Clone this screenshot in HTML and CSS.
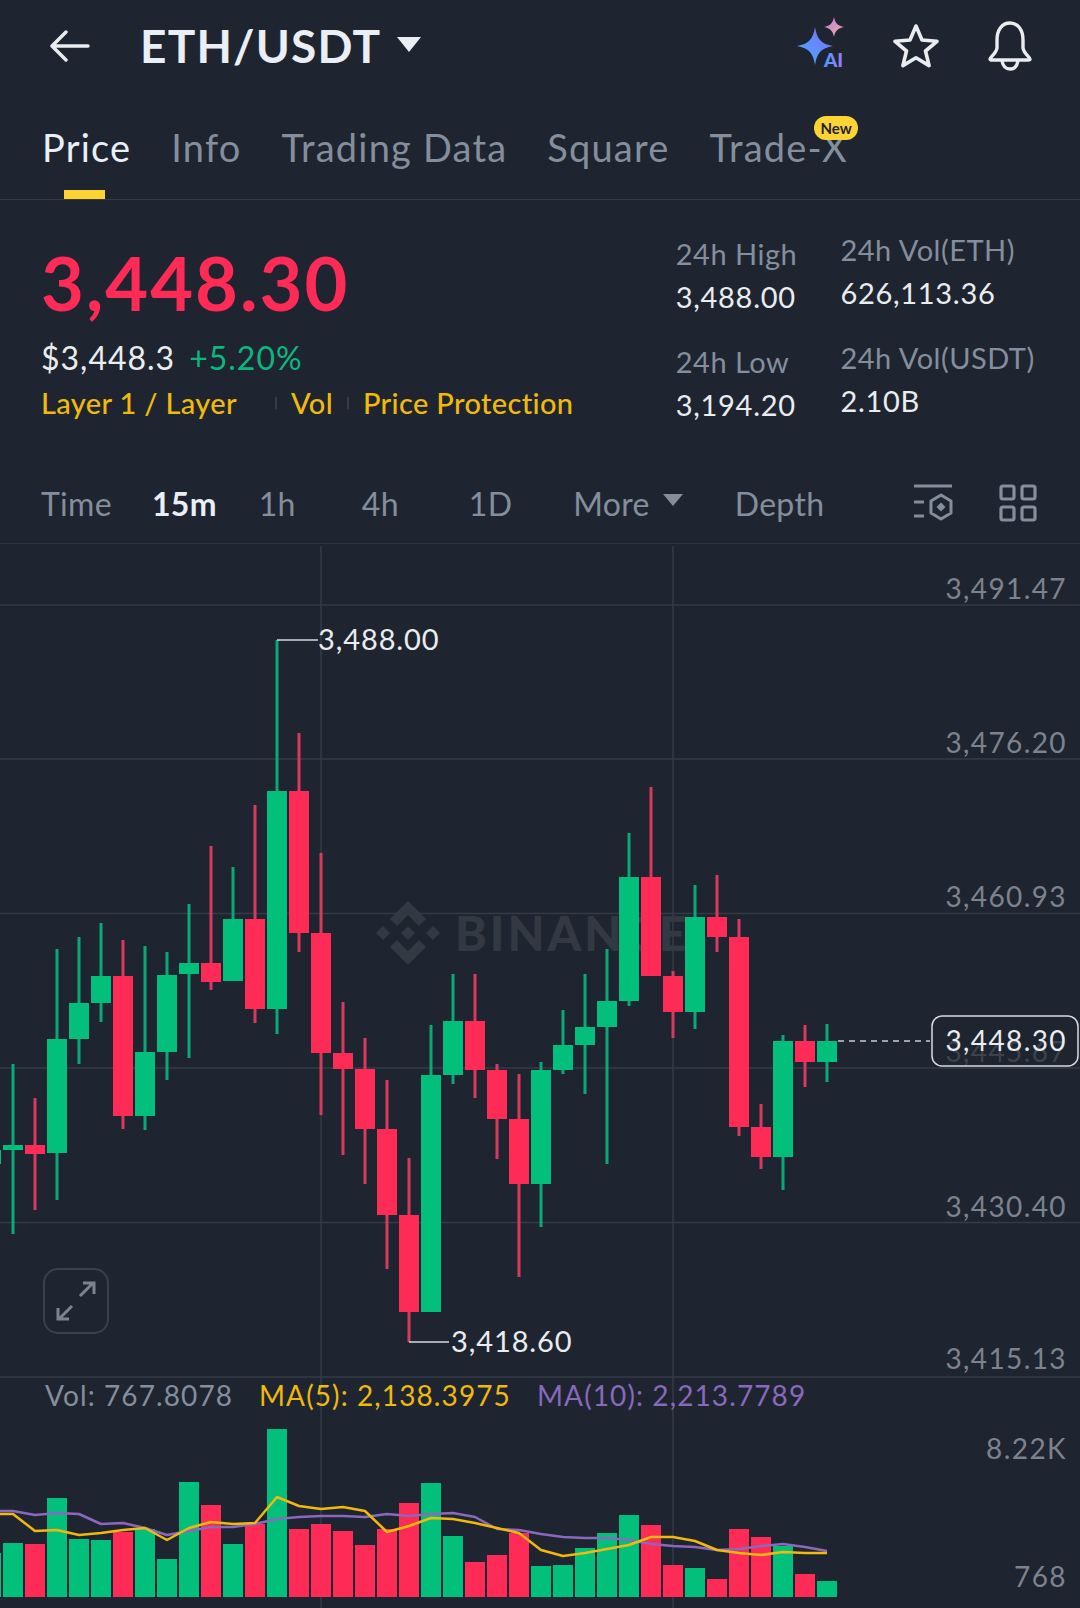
FILE: index.html
```html
<!DOCTYPE html>
<html>
<head>
  <title>ETH/USDT</title>
  <link rel="stylesheet" href="styles.css">
</head>
<body>
  <div class="app">
    <div class="topbar">
      <svg class="back-icon" width="40" height="32" viewBox="0 0 40 32">
        <path d="M38 16H3M16 2L2 16l14 14" fill="none" stroke="#eaecef" stroke-width="3.4" stroke-linecap="round" stroke-linejoin="round"/>
      </svg>
      <div class="pair">ETH/USDT</div>
      <div class="caret"></div>
      <div class="topbar-icons">
        <svg class="ai-icon" width="52" height="58" viewBox="0 0 52 58">
          <defs>
            <linearGradient id="ai-big" x1="0" y1="1" x2="1" y2="0">
              <stop offset="0" stop-color="#3fb4ff"/>
              <stop offset="1" stop-color="#8465f5"/>
            </linearGradient>
            <linearGradient id="ai-small" x1="0" y1="0" x2="1" y2="1">
              <stop offset="0" stop-color="#b47df0"/>
              <stop offset="1" stop-color="#f5b08a"/>
            </linearGradient>
            <linearGradient id="ai-text" x1="0" y1="0" x2="1" y2="0">
              <stop offset="0" stop-color="#4a9cff"/>
              <stop offset="1" stop-color="#9a7af5"/>
            </linearGradient>
          </defs>
          <path d="M18 10C20 22 24 27 36 29C24 31 20 36 18 48C16 36 12 31 0 29C12 27 16 22 18 10Z" fill="url(#ai-big)"/>
          <path d="M37 0C38 6 41 9 47 10C41 11 38 14 37 20C36 14 33 11 27 10C33 9 36 6 37 0Z" fill="url(#ai-small)"/>
          <text class="ai-text" x="27" y="50" fill="url(#ai-text)">AI</text>
        </svg>
        <svg class="star-icon" width="46" height="46" viewBox="0 0 46 46">
          <path d="M23 3l6 14 15 1.300-11.500 9.700 3.600 14.600L23 34.800 9.900 42.600l3.600-14.600L2 18.300 17 17z" fill="none" stroke="#eaecef" stroke-width="3.600" stroke-linejoin="round"/>
        </svg>
        <svg class="bell-icon" width="46" height="50" viewBox="0 0 46 50">
          <path d="M3 38c0-2 6-5 7-11v-8C10 9 15 2 23 2s13 7 13 17v8c1 6 7 9 7 11 0 1-1 1-2 1H5c-1 0-2 0-2-1zM15 40c1 5 4 8 8 8s7-3 8-8" fill="none" stroke="#eaecef" stroke-width="3.400" stroke-linejoin="round"/>
        </svg>
      </div>
    </div>

    <div class="tabs">
      <div class="tab tab-active">Price</div>
      <div class="tab">Info</div>
      <div class="tab">Trading Data</div>
      <div class="tab">Square</div>
      <div class="tab tab-new">Trade-X<span class="badge">New</span></div>
    </div>

    <div class="summary">
      <div class="summary-main">
        <div class="last-price">3,448.30</div>
        <div class="fiat-row">
          <span class="fiat">$3,448.3</span>
          <span class="change">+5.20%</span>
        </div>
        <div class="tag-row">
          <span class="tag tag-layer">Layer 1 / Layer</span>
          <span class="tag-sep"></span>
          <span class="tag">Vol</span>
          <span class="tag-sep"></span>
          <span class="tag">Price Protection</span>
        </div>
      </div>
      <div class="stat-col stat-col-low">
        <div class="stat">
          <div class="stat-label">24h High</div>
          <div class="stat-value">3,488.00</div>
        </div>
        <div class="stat">
          <div class="stat-label">24h Low</div>
          <div class="stat-value">3,194.20</div>
        </div>
      </div>
      <div class="stat-col">
        <div class="stat">
          <div class="stat-label">24h Vol(ETH)</div>
          <div class="stat-value">626,113.36</div>
        </div>
        <div class="stat">
          <div class="stat-label">24h Vol(USDT)</div>
          <div class="stat-value">2.10B</div>
        </div>
      </div>
    </div>

    <div class="intervals">
      <span class="interval i-time">Time</span>
      <span class="interval i-15m">15m</span>
      <span class="interval i-1h">1h</span>
      <span class="interval i-4h">4h</span>
      <span class="interval i-1d">1D</span>
      <span class="interval i-more">More</span>
      <span class="more-caret"></span>
      <span class="interval i-depth">Depth</span>
      <svg class="tool-icon" width="40" height="38" viewBox="0 0 40 38">
        <path d="M1 2h38M1 18h10M1 32h10" fill="none" stroke="#848e9c" stroke-width="3"/>
        <path d="M28 11l10 6v12l-10 6-10-6V17z" fill="none" stroke="#848e9c" stroke-width="3" stroke-linejoin="round"/>
        <path d="M28 18.500l4.500 4.500-4.500 4.500-4.500-4.500z" fill="#848e9c"/>
      </svg>
      <svg class="grid-icon" width="38" height="38" viewBox="0 0 38 38">
        <rect x="2" y="2" width="13" height="13" rx="2" fill="none" stroke="#848e9c" stroke-width="3.200"/>
        <rect x="23" y="2" width="13" height="13" rx="2" fill="none" stroke="#848e9c" stroke-width="3.200"/>
        <rect x="2" y="23" width="13" height="13" rx="2" fill="none" stroke="#848e9c" stroke-width="3.200"/>
        <rect x="23" y="23" width="13" height="13" rx="2" fill="none" stroke="#848e9c" stroke-width="3.200"/>
      </svg>
    </div>

    <!-- viewBox keeps page coordinates, the chart is a free canvas -->
    <svg class="chart" width="1080" height="1065" viewBox="0 543 1080 1065">
      <g class="gridlines">
        <path d="M0 604H1080M0 758H1080M0 912.500H1080M0 1067H1080M0 1221.500H1080M0 1376H1080"/>
        <path d="M321 545V1608M673 545V1608"/>
      </g>

      <g class="watermark">
        <path d="M408 900l18 18-7 7-11-11-11 11-7-7zM408 964l18-18-7-7-11 11-11-11-7 7zM408 925l7 7-7 7-7-7zM383 925l7 7-7 7-7-7zM433 925l7 7-7 7-7-7z"/>
        <text class="watermark-text" x="455" y="950">BINANCE</text>
      </g>

      <g id="candles"></g>

      <path class="marker-line" d="M277 639H318M409 1341H449"/>
      <text class="marker-text" x="318" y="649">3,488.00</text>
      <text class="marker-text" x="451" y="1351">3,418.60</text>

      <path class="last-line" d="M838 1040H930"/>

      <text class="axis-text" x="1067" y="598">3,491.47</text>
      <text class="axis-text" x="1067" y="752">3,476.20</text>
      <text class="axis-text" x="1067" y="906">3,460.93</text>
      <text class="axis-text axis-hidden" x="1067" y="1061">3,445.67</text>
      <text class="axis-text" x="1067" y="1216">3,430.40</text>
      <text class="axis-text" x="1067" y="1368">3,415.13</text>
      <text class="axis-text" x="1067" y="1458">8.22K</text>
      <text class="axis-text" x="1067" y="1586">768</text>

      <rect class="last-box" x="932" y="1015" width="146" height="50" rx="10"/>
      <text class="last-text" x="1067" y="1050">3,448.30</text>

      <rect class="expand-box" x="44" y="1268" width="64" height="64" rx="14"/>
      <path class="expand-arrow" d="M80 1295l13-13M83 1282h11v11M72 1305l-13 13M69 1318H58v-11"/>

      <text class="vol-text" x="45" y="1405">Vol: 767.8078</text>
      <text class="ma5-text" x="259" y="1405">MA(5): 2,138.3975</text>
      <text class="ma10-text" x="537" y="1405">MA(10): 2,213.7789</text>

      <g id="volumes"></g>
      <polyline id="ma10" class="ma10-line" points=""/>
      <polyline id="ma5" class="ma5-line" points=""/>
    </svg>
  </div>

  <script src="chart.js"></script>
</body>
</html>
```

FILE: styles.css
```css
body {
  margin: 0;
  padding: 0;
  background: #1e2530;
  font-family: "Lato", "Liberation Sans", sans-serif;
  color: #eaecef;
}

.app {
  width: 1080px;
  height: 1608px;
  overflow: hidden;
  background: #1e2530;
}

.topbar {
  display: flex;
  align-items: center;
  height: 92px;
  padding-left: 50px;
  box-sizing: border-box;
}

.pair {
  margin-left: 50px;
  font-size: 46px;
  font-weight: 700;
  letter-spacing: 1.2px;
  color: #eaeef5;
  line-height: 1;
}

.caret {
  width: 0;
  height: 0;
  margin-left: 16px;
  margin-top: -4px;
  border-left: 12px solid transparent;
  border-right: 12px solid transparent;
  border-top: 15px solid #eaeef5;
}

.topbar-icons {
  display: flex;
  align-items: center;
  margin-left: auto;
  padding-right: 47px;
}

.star-icon {
  margin-left: 44px;
}

.bell-icon {
  margin-left: 48px;
}

.ai-text {
  font-size: 19px;
  font-weight: 900;
}

.tabs {
  position: relative;
  display: flex;
  gap: 40px;
  height: 108px;
  padding: 33px 0 0 42px;
  box-sizing: border-box;
  border-bottom: 1px solid #363c47;
}

.tab {
  position: relative;
  font-size: 38px;
  line-height: 44px;
  letter-spacing: 1.2px;
  color: #848e9c;
}

.tab-active {
  color: #eaeef5;
}

.tab-active::after {
  content: "";
  position: absolute;
  left: 22px;
  top: 65px;
  width: 41px;
  height: 9px;
  background: #fcd535;
}

.badge {
  position: absolute;
  right: -10px;
  top: -9px;
  padding: 0 6px;
  border-radius: 12px;
  background: #fcd535;
  color: #1e2329;
  font-size: 15px;
  line-height: 24px;
  font-weight: 700;
  letter-spacing: 0;
}

.summary {
  display: flex;
  height: 263px;
  padding-left: 41px;
  box-sizing: border-box;
}

.summary-main {
  width: 636px;
}

.last-price {
  margin-top: 43px;
  font-size: 74px;
  line-height: 80px;
  font-weight: 700;
  letter-spacing: 2px;
  color: #fd2b55;
}

.fiat-row {
  display: flex;
  gap: 14px;
  margin-top: 16px;
  font-size: 32px;
  line-height: 38px;
  letter-spacing: 1px;
}

.change {
  color: #0cb77f;
}

.tag-row {
  display: flex;
  align-items: center;
  margin-top: 8px;
  font-size: 29px;
  line-height: 36px;
  font-weight: 500;
  letter-spacing: 0.35px;
  color: #f0b90b;
}

.tag-sep {
  width: 2px;
  height: 12px;
  margin: 0 14px;
  background: #353c47;
}

.tag-layer {
  margin-right: 24px;
}

.stat-col {
  width: 240px;
  padding-top: 31px;
}

.stat-col-low {
  width: 165px;
  padding-top: 35px;
}

.stat {
  height: 108px;
}

.stat-label {
  font-size: 29px;
  line-height: 38px;
  letter-spacing: 0.5px;
  color: #848e9c;
}

.stat-value {
  margin-top: 6px;
  font-size: 29px;
  line-height: 36px;
  letter-spacing: 0.7px;
}

.intervals {
  display: flex;
  align-items: center;
  height: 80px;
  padding-left: 41px;
  box-sizing: border-box;
  font-size: 32px;
  letter-spacing: 0.3px;
  color: #848e9c;
}

.i-15m {
  margin-left: 40px;
  font-weight: 700;
  color: #eaeef5;
}

.i-1h {
  margin-left: 42px;
}

.i-4h {
  margin-left: 66px;
}

.i-1d {
  margin-left: 70px;
}

.i-more {
  margin-left: 61px;
}

.more-caret {
  width: 0;
  height: 0;
  margin-left: 13px;
  margin-top: -6px;
  border-left: 10px solid transparent;
  border-right: 10px solid transparent;
  border-top: 12px solid #848e9c;
}

.i-depth {
  margin-left: 52px;
}

.tool-icon {
  margin-left: auto;
}

.grid-icon {
  margin-left: 46px;
  margin-right: 43px;
}

.chart {
  display: block;
  border-top: 1px solid #2c333e;
}

.gridlines path {
  fill: none;
  stroke: #353b46;
  stroke-width: 1.5;
}

.watermark path {
  fill: #333943;
}

.watermark-text {
  font-size: 48px;
  font-weight: 900;
  fill: #333943;
  letter-spacing: 3px;
}

.wick-up {
  stroke: #0aa878;
  stroke-width: 3;
}

.wick-down {
  stroke: #d93a5c;
  stroke-width: 3;
}

.body-up,
.vol-up {
  fill: #02c07b;
}

.body-down,
.vol-down {
  fill: #fd2b55;
}

.marker-line {
  fill: none;
  stroke: #d5d9de;
  stroke-width: 1.5;
}

.marker-text {
  font-size: 29px;
  letter-spacing: 0.9px;
  fill: #eaecef;
}

.last-line {
  fill: none;
  stroke: #c9cdd2;
  stroke-width: 1.5;
  stroke-dasharray: 6 5;
}

.axis-text {
  font-size: 28px;
  letter-spacing: 1.4px;
  fill: #7c838e;
  text-anchor: end;
}

.axis-hidden {
  fill: #3d434d;
}

.last-box {
  fill: none;
  stroke: #d8dce1;
  stroke-width: 1.5;
}

.last-text {
  font-size: 28px;
  letter-spacing: 1.4px;
  fill: #eaecef;
  text-anchor: end;
}

.expand-box {
  fill: none;
  stroke: #3a414c;
  stroke-width: 2;
}

.expand-arrow {
  fill: none;
  stroke: #7c838e;
  stroke-width: 3;
}

.vol-text {
  font-size: 28px;
  letter-spacing: 1.1px;
  fill: #848e9c;
}

.ma5-text {
  font-size: 28px;
  letter-spacing: 1.1px;
  fill: #f0b90b;
}

.ma10-text {
  font-size: 28px;
  letter-spacing: 1.1px;
  fill: #8a68bd;
}

.ma5-line {
  fill: none;
  stroke: #f0b90b;
  stroke-width: 2.5;
  stroke-linejoin: round;
}

.ma10-line {
  fill: none;
  stroke: #8a68bd;
  stroke-width: 2.5;
  stroke-linejoin: round;
}
```

FILE: chart.js
```js
// bodyTop, bodyBottom, wickTop, wickBottom, up
const candles = [
  [1144, 1149, 1063, 1233, 1],
  [1144, 1153, 1097, 1209, 0],
  [1038, 1152, 948, 1199, 1],
  [1002, 1038, 936, 1063, 1],
  [975, 1002, 922, 1021, 1],
  [975, 1115, 939, 1128, 0],
  [1051, 1115, 945, 1129, 1],
  [974, 1051, 951, 1079, 1],
  [962, 973, 903, 1057, 1],
  [962, 981, 845, 989, 0],
  [918, 980, 866, 980, 1],
  [918, 1008, 804, 1022, 0],
  [790, 1008, 639, 1033, 1],
  [790, 932, 732, 951, 0],
  [932, 1052, 852, 1114, 0],
  [1052, 1068, 1001, 1154, 0],
  [1068, 1128, 1037, 1183, 0],
  [1128, 1214, 1079, 1268, 0],
  [1214, 1311, 1157, 1341, 0],
  [1074, 1311, 1024, 1311, 1],
  [1020, 1074, 973, 1083, 1],
  [1020, 1069, 973, 1097, 0],
  [1069, 1118, 1063, 1158, 0],
  [1118, 1183, 1073, 1276, 0],
  [1069, 1183, 1061, 1226, 1],
  [1044, 1069, 1009, 1073, 1],
  [1026, 1044, 973, 1093, 1],
  [1000, 1026, 948, 1163, 1],
  [876, 1000, 832, 1005, 1],
  [876, 975, 786, 975, 0],
  [975, 1011, 970, 1037, 0],
  [916, 1011, 884, 1028, 1],
  [916, 936, 874, 951, 0],
  [936, 1126, 918, 1135, 0],
  [1126, 1156, 1103, 1168, 0],
  [1040, 1156, 1034, 1189, 1],
  [1040, 1061, 1024, 1086, 0],
  [1040, 1061, 1023, 1081, 1]
];

const volumes = [
  1542, 1543, 1497, 1538, 1539, 1531, 1528, 1558, 1481, 1504,
  1543, 1523, 1428, 1528, 1523, 1530, 1544, 1528, 1502, 1482,
  1535, 1561, 1554, 1532, 1565, 1564, 1547, 1532, 1514, 1524,
  1564, 1567, 1578, 1528, 1536, 1545, 1573, 1580
];

const ma5 = [
  1513, 1530, 1529, 1534, 1532, 1529, 1527, 1539, 1527, 1521,
  1523, 1522, 1496, 1505, 1508, 1506, 1510, 1531, 1525, 1517,
  1518, 1522, 1527, 1532, 1549, 1555, 1552, 1548, 1544, 1536,
  1536, 1540, 1549, 1552, 1554, 1551, 1552, 1552
];

const ma10 = [
  1510, 1514, 1512, 1513, 1523, 1522, 1527, 1534, 1530, 1526,
  1526, 1523, 1518, 1516, 1515, 1515, 1516, 1513, 1515, 1513,
  1512, 1516, 1528, 1529, 1533, 1536, 1537, 1537, 1539, 1543,
  1545, 1546, 1549, 1548, 1545, 1543, 1546, 1550
];

const SVG_NS = 'http://www.w3.org/2000/svg';
const BASELINE = 1596;

function centerX(i) {
  return 13 + i * 22;
}

function makeRect(className, x, y, height) {
  const rect = document.createElementNS(SVG_NS, 'rect');
  rect.setAttribute('class', className);
  rect.setAttribute('x', x);
  rect.setAttribute('y', y);
  rect.setAttribute('width', 20);
  rect.setAttribute('height', height);
  return rect;
}

function drawCandles() {
  const group = document.getElementById('candles');
  candles.forEach(function (c, i) {
    const x = centerX(i);
    const side = c[4] ? 'up' : 'down';

    const wick = document.createElementNS(SVG_NS, 'line');
    wick.setAttribute('class', 'wick-' + side);
    wick.setAttribute('x1', x);
    wick.setAttribute('x2', x);
    wick.setAttribute('y1', c[2]);
    wick.setAttribute('y2', c[3]);
    group.appendChild(wick);

    group.appendChild(makeRect('body-' + side, x - 10, c[0], c[1] - c[0]));
  });
  // the candle cut by the left edge
  group.appendChild(makeRect('body-up', -19, 1149, 14));
}

function drawVolumes() {
  const group = document.getElementById('volumes');
  volumes.forEach(function (top, i) {
    const side = candles[i][4] ? 'up' : 'down';
    group.appendChild(makeRect('vol-' + side, centerX(i) - 10, top, BASELINE - top));
  });
  group.appendChild(makeRect('vol-up', -19, 1552, BASELINE - 1552));
}

function drawLine(id, values) {
  const points = values.map(function (y, i) {
    return centerX(i) + ',' + y;
  });
  points.unshift('0,' + values[0]);
  document.getElementById(id).setAttribute('points', points.join(' '));
}

drawCandles();
drawVolumes();
drawLine('ma10', ma10);
drawLine('ma5', ma5);
```
